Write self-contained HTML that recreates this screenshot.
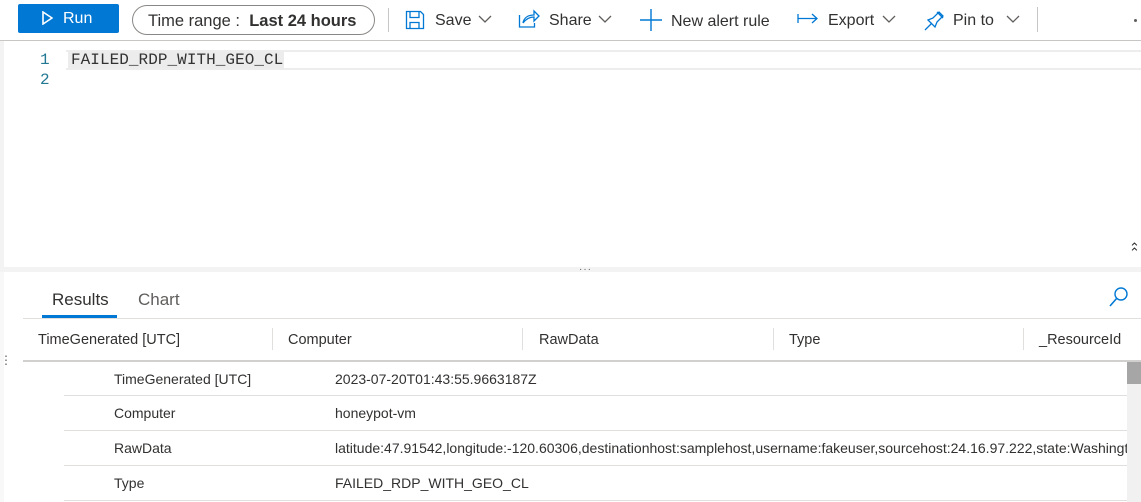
<!DOCTYPE html>
<html><head><style>
*{margin:0;padding:0;box-sizing:border-box}
body{width:1141px;height:502px;overflow:hidden;background:#fff;font-family:"Liberation Sans",sans-serif;color:#323130;position:relative}
.a{position:absolute;white-space:nowrap}
.tb{font-size:16px;color:#323130}
.hd{font-size:14.5px;color:#323130}
.cell{font-size:14px;color:#323130}
.mono{font-family:'Liberation Mono',monospace;font-size:16px}
</style></head><body>
<div class="a" style="left:18px;top:4px;width:101px;height:29px;background:#0078d4;border-radius:2px"></div>
<svg class="a" style="left:41px;top:11px" width="12" height="14"><path d="M2 1 L11 7 L2 13 Z" fill="none" stroke="#fff" stroke-width="1.6"/></svg>
<div class="a" style="left:63px;top:10px;font-size:16px;color:#fff">Run</div>
<div class="a" style="left:132px;top:5px;width:243px;height:30px;border:1px solid #8a8886;border-radius:15px"></div>
<div class="a tb" style="left:148px;top:12px;font-size:16.5px">Time range :&nbsp; <b style="font-weight:600">Last 24 hours</b></div>
<div class="a" style="left:388px;top:8px;width:1px;height:24px;background:#c8c6c4"></div>
<svg class="a" style="left:405px;top:10px" width="20" height="20"><path d="M1.5 1.5h14l3 3v14h-17z M5 1.5v6h9v-6 M5 18.5v-6h9v6" fill="none" stroke="#0078d4" stroke-width="1.3"/></svg>
<div class="a tb" style="left:435px;top:12px">Save</div>
<svg class="a" style="left:478px;top:15px" width="14" height="9"><path d="M1 1l6 6 6-6" fill="none" stroke="#605e5c" stroke-width="1.3"/></svg>
<svg class="a" style="left:518px;top:9px" width="22" height="20"><path d="M1.5 6v12h15v-4 M5 14c1-6 6-8 11-8v-4l5 5-5 5v-4c-4 0-8 2-11 6" fill="none" stroke="#0078d4" stroke-width="1.3"/></svg>
<div class="a tb" style="left:549px;top:12px">Share</div>
<svg class="a" style="left:598px;top:15px" width="14" height="9"><path d="M1 1l6 6 6-6" fill="none" stroke="#605e5c" stroke-width="1.3"/></svg>
<svg class="a" style="left:640px;top:9px" width="22" height="22"><path d="M11 0v22M0 11h22" stroke="#0078d4" stroke-width="1.4"/></svg>
<div class="a tb" style="left:671px;top:13px">New alert rule</div>
<svg class="a" style="left:797px;top:13px" width="22" height="12"><path d="M1 1v9M1 5.5h19M15 1l5 4.5-5 4.5" fill="none" stroke="#0078d4" stroke-width="1.3"/></svg>
<div class="a tb" style="left:828px;top:12px">Export</div>
<svg class="a" style="left:882px;top:15px" width="14" height="9"><path d="M1 1l6 6 6-6" fill="none" stroke="#605e5c" stroke-width="1.3"/></svg>
<svg class="a" style="left:924px;top:9px" width="22" height="22"><path d="M1 21l7-7 M4 11l7 7 2-5 6-6-4-4-6 6z M13 3l6 6" fill="none" stroke="#0078d4" stroke-width="1.3"/></svg>
<div class="a tb" style="left:953px;top:12px">Pin to</div>
<svg class="a" style="left:1006px;top:15px" width="14" height="9"><path d="M1 1l6 6 6-6" fill="none" stroke="#605e5c" stroke-width="1.3"/></svg>
<div class="a" style="left:1037px;top:7px;width:1px;height:25px;background:#c8c6c4"></div>
<div class="a" style="left:1134px;top:19px;width:3px;height:3px;background:#605e5c;border-radius:50%"></div>
<div class="a" style="left:0;top:40px;width:1141px;height:1px;background:#c8c6c4"></div>
<div class="a" style="left:0;top:41px;width:4px;height:227px;background:#f3f3f3"></div>
<div class="a" style="left:66px;top:50px;width:1075px;height:20px;border-top:2px solid #ededed;border-bottom:2px solid #ededed"></div>
<div class="a" style="left:68px;top:52px;width:216px;height:16px;background:#ececec"></div>
<div class="a mono" style="left:40px;top:51px;color:#237893">1</div>
<div class="a mono" style="left:40px;top:71px;color:#237893">2</div>
<div class="a mono" style="left:71px;top:51px;color:#333;letter-spacing:0.05px">FAILED_RDP_WITH_GEO_CL</div>
<div class="a" style="left:1129px;top:240px;font-size:13px;color:#333">&#8963;</div>
<div class="a" style="left:1129px;top:245px;font-size:13px;color:#333">&#8963;</div>
<div class="a" style="left:0;top:267px;width:1141px;height:5px;background:#f3f3f3"></div>
<div class="a" style="left:579px;top:264px;font-size:10px;color:#605e5c;letter-spacing:1px">···</div>
<div class="a" style="left:0;top:272px;width:4px;height:230px;background:#f8f8f8"></div>
<div class="a" style="left:52px;top:290px;font-size:17px;color:#323130">Results</div>
<div class="a" style="left:138px;top:290px;font-size:17px;color:#605e5c">Chart</div>
<div class="a" style="left:42px;top:315px;width:75px;height:3px;background:#0078d4"></div>
<svg class="a" style="left:1106px;top:286px" width="24" height="22"><circle cx="15" cy="8" r="6" fill="none" stroke="#0078d4" stroke-width="1.4"/><path d="M11 12l-7 8" stroke="#0078d4" stroke-width="1.6"/></svg>
<div class="a" style="left:23px;top:318px;width:1118px;height:1px;background:#e1dfdd"></div>
<div class="a hd" style="left:38px;top:332px">TimeGenerated [UTC]</div>
<div class="a" style="left:272px;top:328px;width:1px;height:22px;background:#e1dfdd"></div>
<div class="a hd" style="left:288px;top:332px">Computer</div>
<div class="a" style="left:522px;top:328px;width:1px;height:22px;background:#e1dfdd"></div>
<div class="a hd" style="left:539px;top:332px">RawData</div>
<div class="a" style="left:773px;top:328px;width:1px;height:22px;background:#e1dfdd"></div>
<div class="a hd" style="left:789px;top:332px">Type</div>
<div class="a" style="left:1023px;top:328px;width:1px;height:22px;background:#e1dfdd"></div>
<div class="a hd" style="left:1039px;top:332px">_ResourceId</div>
<div class="a" style="left:23px;top:360px;width:1118px;height:2px;background:#d2d0ce"></div>
<div class="a" style="left:0;top:353px;font-size:12px;color:#605e5c">⋮</div>
<div class="a" style="left:1127px;top:362px;width:14px;height:140px;background:#f1f1f1"></div>
<div class="a" style="left:1127px;top:362px;width:14px;height:22px;background:#a6a6a6"></div>
<div class="a cell" style="left:114px;top:371px">TimeGenerated [UTC]</div>
<div class="a cell" style="left:335px;top:371px">2023-07-20T01:43:55.9663187Z</div>
<div class="a" style="left:64px;top:395px;width:1063px;height:1px;background:#e1dfdd"></div>
<div class="a cell" style="left:114px;top:405px">Computer</div>
<div class="a cell" style="left:335px;top:405px">honeypot-vm</div>
<div class="a" style="left:64px;top:430px;width:1063px;height:1px;background:#e1dfdd"></div>
<div class="a cell" style="left:114px;top:440px">RawData</div>
<div class="a cell" style="left:335px;top:440px;width:792px;overflow:hidden">latitude:47.91542,longitude:-120.60306,destinationhost:samplehost,username:fakeuser,sourcehost:24.16.97.222,state:Washington</div>
<div class="a" style="left:64px;top:465px;width:1063px;height:1px;background:#e1dfdd"></div>
<div class="a cell" style="left:114px;top:475px">Type</div>
<div class="a cell" style="left:335px;top:475px">FAILED_RDP_WITH_GEO_CL</div>
<div class="a" style="left:64px;top:500px;width:1063px;height:1px;background:#e1dfdd"></div>
</body></html>
